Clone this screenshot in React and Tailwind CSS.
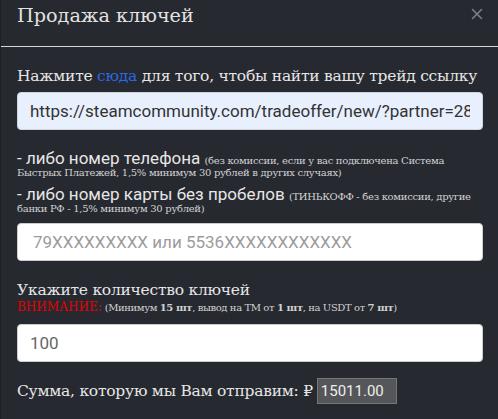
import React, { useState } from 'react'

const slab = { fontFamily: '"DejaVu Serif", "Liberation Serif", serif' }
const sans = { fontFamily: 'Roboto, "Liberation Sans", sans-serif' }

export default function App() {
  const [trade, setTrade] = useState('https://steamcommunity.com/tradeoffer/new/?partner=286104573&token=xQ3vB7kL')
  const [card, setCard] = useState('')
  const [count, setCount] = useState('100')

  return (
    <div className="w-[498px] h-[419px] overflow-hidden bg-[#262930] border-l border-[#1d1f24] text-[#e6e6e6]" style={slab}>
      {/* Header */}
      <div className="h-[47px] flex items-start justify-between pt-[4px] pl-4 pr-[15px] border-b border-[#d6d6d6]">
        <h2 className="text-[19.2px] leading-[24px] text-[#e2e2e2] font-normal">Продажа ключей</h2>
        <button className="mt-[4px] text-[#7c7f85]">
          <svg width="12" height="12" viewBox="0 0 12 12" fill="none" stroke="currentColor" strokeWidth="1.6" strokeLinecap="round">
            <path d="M1.5 1.5 L10.5 10.5 M10.5 1.5 L1.5 10.5" />
          </svg>
        </button>
      </div>

      {/* Body */}
      <div className="px-4 pt-[19px]">
        <p className="text-[15.5px] leading-[20px] tracking-[-0.25px] whitespace-nowrap">
          Нажмите <a href="#" className="text-[#2a68e6]">сюда</a> для того, чтобы найти вашу трейд ссылку
        </p>
        <input
          value={trade}
          onChange={(e) => setTrade(e.target.value)}
          className="block mt-[6px] w-[466px] h-[38px] rounded bg-[#e8f0fe] border border-[#cdd5df] px-3 text-[17px] text-[#333] outline-none"
          style={sans}
        />

        <div className="mt-[22px] text-[10px] leading-[12px] tracking-[-0.3px] text-[#d2d2d2]">
          <span className="text-[17px] leading-[12px] tracking-normal text-[#e6e6e6]" style={sans}>- либо номер телефона </span>
          (без комиссии, если у вас подключена Система Быстрых Платежей, 1,5% минимум 30 рублей в других случаях)
        </div>
        <div className="mt-[9px] text-[10px] leading-[12px] tracking-[-0.3px] text-[#d2d2d2]">
          <span className="text-[17px] leading-[12px] tracking-normal text-[#e6e6e6]" style={sans}>- либо номер карты без пробелов </span>
          (ТИНЬКОФФ - без комиссии, другие банки РФ - 1,5% минимум 30 рублей)
        </div>

        <input
          value={card}
          onChange={(e) => setCard(e.target.value)}
          placeholder="79XXXXXXXXX или 5536XXXXXXXXXXXX"
          className="block mt-[8px] w-[466px] h-[38px] rounded bg-white border border-[#ccc] px-[15px] text-[17px] text-[#333] placeholder:text-[#9c9c9c] outline-none"
          style={sans}
        />

        <div className="mt-[19px] text-[15.5px] leading-[20px] tracking-[-0.25px]">Укажите количество ключей</div>
        <div className="text-[10px] leading-[14px] tracking-[-0.4px] text-[#d2d2d2]">
          <span className="text-[#e30000] text-[12px] tracking-normal">ВНИМАНИЕ:</span> (Минимум <b>15 шт</b>, вывод на ТМ от <b>1 шт</b>, на USDT от <b>7 шт</b>)
        </div>
        <input
          value={count}
          onChange={(e) => setCount(e.target.value)}
          className="block mt-[9px] w-[466px] h-[38px] rounded bg-white border border-[#ccc] px-3 text-[17px] text-[#666] outline-none"
          style={sans}
        />

        <div className="mt-[16px] flex items-center text-[15.5px] leading-[20px] tracking-[-0.25px]">
          <span>Сумма, которую мы Вам отправим: ₽</span>
          <input
            readOnly
            value="15011.00"
            className="ml-[4px] w-[80px] h-[26px] bg-[#555659] border border-[#74767a] px-[3px] text-[15px] tracking-normal text-[#eee] outline-none"
            style={sans}
          />
        </div>
      </div>
    </div>
  )
}
